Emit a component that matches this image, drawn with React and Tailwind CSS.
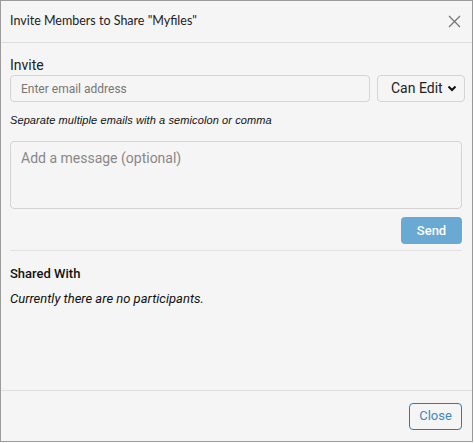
import { useState } from "react"

export default function App(){
    const [email, setEmail] = useState("");
    const [note, setNote] = useState("");

    return(
        <div className="w-[473px] h-[442px] bg-[#f5f5f5] border border-[#9b9b9b] flex flex-col font-['Roboto',sans-serif] text-[#222]">
            <div className="h-[42px] shrink-0 border-b border-[#dedede] flex items-center justify-between pl-[9px] pr-[10px]">
                <h1 className="text-[12.5px] text-[#222] font-['Lato',sans-serif]">Invite Members to Share "Myfiles"</h1>
                <button className="w-[16px] h-[16px] flex items-center justify-center text-[#777]">
                    <svg width="13" height="13" viewBox="0 0 13 13" fill="none" stroke="currentColor" strokeWidth="1.3">
                        <path d="M1 1L12 12M12 1L1 12" />
                    </svg>
                </button>
            </div>

            <div className="flex-1 pl-[9px] pr-[10px] pt-[12px]">
                <label className="block text-[14px] leading-[20px] text-[#222]">Invite</label>
                <div className="flex gap-[7px] w-[456px]">
                    <input
                        value={email}
                        onChange={(e) => setEmail(e.target.value)}
                        type="text"
                        placeholder="Enter email address"
                        className="w-[360px] h-[27px] shrink-0 rounded-[4px] border border-[#d4d4d4] bg-[#f5f5f5] px-[10px] text-[12px] placeholder:text-[#777] outline-none"
                    />
                    <div className="w-[88px] h-[27px] shrink-0 rounded-[4px] border border-[#d4d4d4] flex items-center justify-between pl-[13px] pr-[7px] text-[14px] text-[#222]">
                        <span>Can Edit</span>
                        <svg width="10" height="7" viewBox="0 0 10 7" fill="none" stroke="#111" strokeWidth="2">
                            <path d="M1.5 1.5L5 5L8.5 1.5" />
                        </svg>
                    </div>
                </div>
                <p className="mt-[11px] text-[11px] leading-[15px] italic tracking-[0.1px] font-['Liberation_Sans',sans-serif] text-[#111]">Separate multiple emails with a semicolon or comma</p>
                <textarea
                    value={note}
                    onChange={(e) => setNote(e.target.value)}
                    placeholder="Add a message (optional)"
                    className="mt-[13px] block w-full h-[68px] resize-none rounded-[4px] border border-[#d4d4d4] bg-[#f5f5f5] px-[10px] py-[6px] text-[14px] placeholder:text-[#888] outline-none"
                />
                <div className="flex justify-end mt-[8px]">
                    <button className="w-[61px] h-[27px] rounded-[4px] bg-[#6aa9d3] text-white text-[13px] font-medium">Send</button>
                </div>
                <div className="mt-[6px] border-t border-[#e2e2e2]"></div>
                <h2 className="mt-[14px] text-[13px] leading-[18px] font-medium text-[#111]">Shared With</h2>
                <p className="mt-[7px] text-[13px] leading-[18px] italic text-[#111]">Currently there are no participants.</p>
            </div>

            <div className="h-[51px] shrink-0 border-t border-[#dedede] flex items-center justify-end pr-[10px]">
                <button className="w-[53px] h-[27px] rounded-[4px] border border-[#2b7bb9] text-[#3d88c2] text-[13px]">Close</button>
            </div>
        </div>
    )
}
